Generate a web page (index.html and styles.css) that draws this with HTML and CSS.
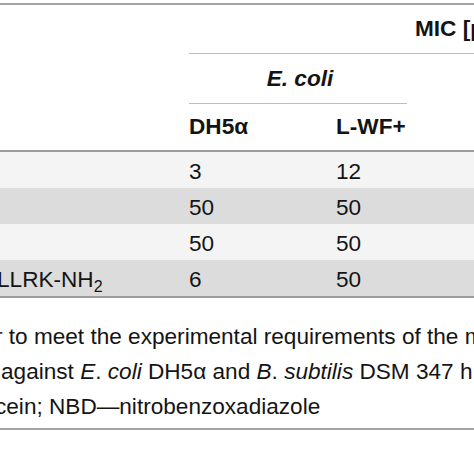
FILE: index.html
```html
<!DOCTYPE html>
<html>
<head>
<meta charset="utf-8">
<link rel="stylesheet" href="styles.css">
</head>
<body>
<div class="page">
  <div class="table">
    <div class="head">
      <div class="stub"></div>
      <div class="mic">MIC [µM]</div>
      <div class="group"><i>E. coli</i></div>
      <div class="blank"></div>
      <div class="strain">DH5α</div>
      <div class="strain">L-WF+</div>
      <div class="blank"></div>
    </div>
    <div class="row light"><div class="name"></div><div class="val">3</div><div class="val">12</div><div></div></div>
    <div class="row dark"><div class="name"></div><div class="val">50</div><div class="val">50</div><div></div></div>
    <div class="row light"><div class="name"></div><div class="val">50</div><div class="val">50</div><div></div></div>
    <div class="row dark"><div class="name cut">LLRK-NH<sub>2</sub></div><div class="val">6</div><div class="val">50</div><div></div></div>
  </div>
  <div class="caption">
    <div class="line l1">r to meet the experimental requirements of the m</div>
    <div class="line l2">against <i>E</i>. <i>coli</i> DH5α and <i>B</i>. <i>subtilis</i> DSM 347 h</div>
    <div class="line l3">cein; NBD—nitrobenzoxadiazole</div>
  </div>
  <div class="rule"></div>
</div>
</body>
</html>
```

FILE: styles.css
```css
html, body {
  margin: 0;
  padding: 0;
  background: #ffffff;
  overflow: hidden;
}
.page {
  width: 474px;
  height: 474px;
  overflow: hidden;
  padding-top: 3px;
  box-sizing: border-box;
  font-family: "Liberation Sans", Arial, sans-serif;
  font-size: 22.6px;
  color: #141414;
}
.table {
  border-top: 2px solid #a4a4a4;
  border-bottom: 2px solid #9c9c9c;
}
.head {
  display: grid;
  grid-template-columns: 189px 147px 71px 1fr;
  grid-template-rows: 49px 50px 46px;
  border-bottom: 2px solid #9c9c9c;
  font-weight: bold;
}
.stub {
  grid-column: 1;
  grid-row: 1 / 4;
}
.mic {
  grid-column: 2 / 5;
  grid-row: 1;
  border-bottom: 1px solid #bdbdbd;
  padding-left: 226px;
  display: flex;
  align-items: center;
  white-space: nowrap;
}
.group {
  grid-column: 2 / 4;
  grid-row: 2;
  border-bottom: 1px solid #bdbdbd;
  display: flex;
  align-items: center;
  justify-content: center;
  padding-left: 4px;
}
.group i {
  font-style: italic;
}
.strain {
  display: flex;
  align-items: center;
  white-space: nowrap;
}
.row {
  display: grid;
  grid-template-columns: 189px 147px 71px 1fr;
  height: 36px;
  align-items: center;
}
.light {
  background: #f4f4f4;
}
.dark {
  background: #dcdcdd;
}
.val {
  white-space: nowrap;
  padding-top: 3px;
}
.name {
  white-space: nowrap;
  padding-top: 3px;
}
.cut {
  text-indent: -3px;
}
.cut sub {
  font-size: 16px;
  vertical-align: -5px;
  line-height: 0;
}
.caption {
  margin-top: 21px;
  line-height: 35px;
}
.line {
  white-space: nowrap;
}
.l1 {
  text-indent: -5px;
}
.l2 {
  text-indent: 1px;
}
.l3 {
  text-indent: -5px;
}
.rule {
  margin-top: 4px;
  height: 2px;
  background: #a4a4a4;
}
```
